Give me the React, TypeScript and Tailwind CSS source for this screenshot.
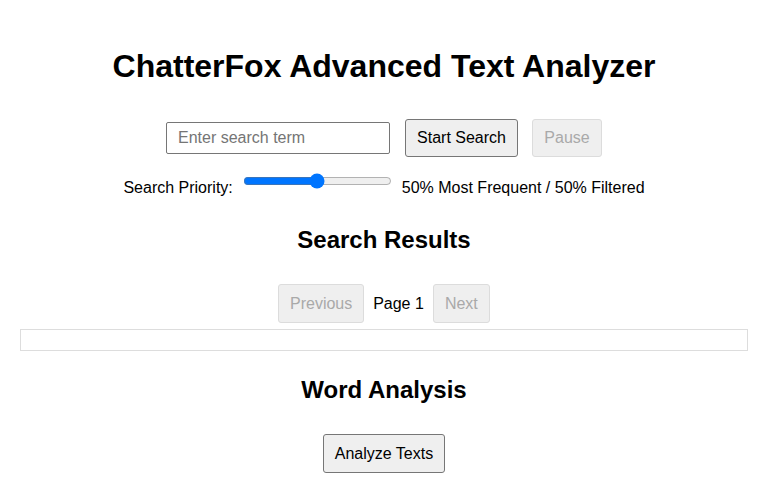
import { useState } from 'react';

const font = { fontFamily: '"Liberation Sans", Arial, sans-serif' };

function Btn({
  label,
  disabled,
  className = '',
}: {
  label: string;
  disabled?: boolean;
  className?: string;
}) {
  return (
    <button
      disabled={disabled}
      className={`flex items-center justify-center rounded-[3px] border text-[16px] leading-[18px] ${
        disabled
          ? 'border-[#dcdcdc] bg-[#efefef] text-[#a9a9a9]'
          : 'border-[#767676] bg-[#efefef] text-black'
      } ${className}`}
    >
      {label}
    </button>
  );
}

export default function App() {
  const [priority, setPriority] = useState(50);
  const [term, setTerm] = useState('');

  return (
    <div className="min-h-[480px] bg-white px-[20px] text-black" style={font}>
      <h1 className="pt-[48px] text-center text-[32px] font-bold leading-[36px]">
        ChatterFox Advanced Text Analyzer
      </h1>

      <div className="mt-[35px] flex items-center justify-center">
        <input
          type="text"
          value={term}
          onChange={(e) => setTerm(e.target.value)}
          placeholder="Enter search term"
          className="h-[32px] w-[224px] rounded-[2px] border border-[#767676] px-[11px] text-[16px] placeholder:text-[#757575] outline-none"
        />
        <Btn label="Start Search" className="ml-[15px] h-[38px] w-[113px]" />
        <Btn label="Pause" disabled className="ml-[14px] h-[38px] w-[70px]" />
      </div>

      <div className="mt-[16px] flex items-start justify-center text-[16px] leading-[18px]">
        <span className="mt-[6px]">Search Priority:</span>
        <input
          type="range"
          min={0}
          max={100}
          value={priority}
          onChange={(e) => setPriority(Number(e.target.value))}
          className="mx-[10px] m-0 h-[16px] w-[149px] accent-[#0075ff]"
        />
        <span className="mt-[6px]">
          {priority}% Most Frequent / {100 - priority}% Filtered
        </span>
      </div>

      <h2 className="mt-[29px] text-center text-[24px] font-bold leading-[27px]">
        Search Results
      </h2>

      <div className="mt-[31px] flex items-center justify-center text-[16px]">
        <Btn label="Previous" disabled className="h-[39px] w-[86px]" />
        <span className="mx-[9px]">Page 1</span>
        <Btn label="Next" disabled className="h-[39px] w-[57px]" />
      </div>

      <div className="mt-[6px] h-[22px] border border-[#dddddd]" />

      <h2 className="mt-[25px] text-center text-[24px] font-bold leading-[27px]">
        Word Analysis
      </h2>

      <div className="mt-[31px] flex justify-center">
        <Btn label="Analyze Texts" className="h-[39px] w-[122px]" />
      </div>
    </div>
  );
}
